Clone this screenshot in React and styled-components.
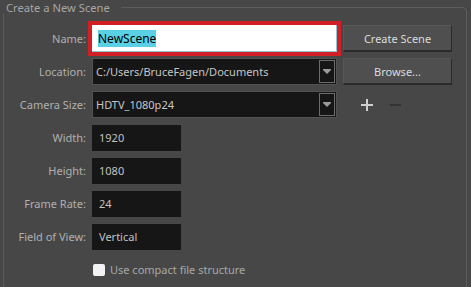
import styled, { createGlobalStyle } from "styled-components";

const Global = createGlobalStyle`
  html, body {
    margin: 0;
    padding: 0;
    background: #474747;
    overflow: hidden;
  }
  body {
    font-family: "Noto Sans", "Open Sans", sans-serif;
    font-size: 11px;
    color: #b4b4b4;
  }
`;

const Page = styled.div`
  width: 471px;
  height: 287px;
  overflow: hidden;
`;

const Frame = styled.fieldset`
  margin: 0 4px 0 3px;
  padding: 11px 0 40px 0;
  border: 1px solid #5c5c5c;
  border-bottom: none;
  border-radius: 0 5px 0 0;
  min-height: 320px;
  box-sizing: border-box;
`;

const Title = styled.legend`
  margin-left: -4px;
  padding: 2px 11px 0 6px;
  background: #474747;
  color: #a6a6a6;
  font-size: 11.2px;
  line-height: 12px;
`;

const Grid = styled.div`
  display: grid;
  grid-template-columns: 82px 245px 109px;
  grid-auto-rows: 27px;
  column-gap: 6px;
  row-gap: 6px;
  align-items: center;
`;

const Label = styled.label`
  text-align: right;
  color: #b0b0b0;
  white-space: nowrap;
`;

const NameInput = styled.div`
  height: 27px;
  box-sizing: border-box;
  background: #ffffff;
  border-right: 1px solid #8fc3d6;
  border-bottom: 1px solid #8fc3d6;
  outline: 4px solid #d21f25;
  display: flex;
  align-items: center;
  padding-left: 6px;
  color: #000;
  font-size: 12px;
`;

const Selected = styled.span`
  background: #5ad0e4;
  line-height: 17px;
`;

const Combo = styled.div`
  height: 27px;
  box-sizing: border-box;
  background: #161616;
  border: 1px solid #525252;
  display: flex;
  align-items: stretch;
  color: #c6c6c6;
`;

const ComboText = styled.div`
  flex: 1;
  display: flex;
  align-items: center;
  padding-left: 3px;
`;

const Drop = styled.div`
  width: 14px;
  border: 1px solid #6c6c6c;
  margin: 1px;
  display: flex;
  align-items: center;
  justify-content: center;
`;

const Spin = styled.div`
  width: 89px;
  height: 26px;
  box-sizing: border-box;
  background: #161616;
  display: flex;
  align-items: center;
  padding-left: 7px;
  color: #c2c2c2;
`;

const Button = styled.button`
  height: 27px;
  box-sizing: border-box;
  background: #4f4f4f;
  border: 1px solid #2a2a2a;
  border-top-color: #575757;
  border-left-color: #575757;
  border-bottom-width: 2px;
  color: #dcdcdc;
  font-family: inherit;
  font-size: 11px;
  padding: 0;
`;

const Tools = styled.div`
  display: flex;
  align-items: center;
  gap: 17px;
  padding-left: 18px;
`;

const CheckRow = styled.label`
  grid-column: 2 / 4;
  display: flex;
  align-items: center;
  gap: 5px;
  color: #a8a8a8;
  padding-left: 1px;
`;

const Box = styled.span`
  width: 12px;
  height: 12px;
  border-radius: 2px;
  background: #f2f2f2;
`;

const Arrow = () => (
  <svg width="8" height="6" viewBox="0 0 8 6">
    <rect x="0" y="0" width="8" height="1" fill="#9a9a9a" />
    <path d="M0 1 L8 1 L4 5 Z" fill="#9a9a9a" />
  </svg>
);

const Plus = () => (
  <svg width="12" height="12" viewBox="0 0 12 12">
    <rect x="5" y="0" width="2" height="12" fill="#cfcfcf" />
    <rect x="0" y="5" width="12" height="2" fill="#cfcfcf" />
  </svg>
);

const Minus = () => (
  <svg width="11" height="12" viewBox="0 0 11 12">
    <rect x="0" y="5" width="11" height="2" fill="#333333" />
  </svg>
);

const Empty = styled.span``;

export default function App() {
  return (
    <Page>
      <Global />
      <Frame>
        <Title>Create a New Scene</Title>
        <Grid>
          <Label>Name:</Label>
          <NameInput>
            <Selected>NewScene</Selected>
          </NameInput>
          <Button>Create Scene</Button>

          <Label>Location:</Label>
          <Combo>
            <ComboText>C:/Users/BruceFagen/Documents</ComboText>
            <Drop>
              <Arrow />
            </Drop>
          </Combo>
          <Button>Browse...</Button>

          <Label>Camera Size:</Label>
          <Combo>
            <ComboText>HDTV_1080p24</ComboText>
            <Drop>
              <Arrow />
            </Drop>
          </Combo>
          <Tools>
            <Plus />
            <Minus />
          </Tools>

          <Label>Width:</Label>
          <Spin>1920</Spin>
          <Empty />

          <Label>Height:</Label>
          <Spin>1080</Spin>
          <Empty />

          <Label>Frame Rate:</Label>
          <Spin>24</Spin>
          <Empty />

          <Label>Field of View:</Label>
          <Spin>Vertical</Spin>
          <Empty />

          <Empty />
          <CheckRow>
            <Box />
            Use compact file structure
          </CheckRow>
        </Grid>
      </Frame>
    </Page>
  );
}
